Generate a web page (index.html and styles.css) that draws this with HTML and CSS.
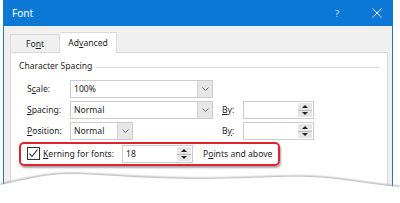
FILE: index.html
```html
<!DOCTYPE html>
<html lang="en">
<head>
    <meta charset="UTF-8">
    <meta name="viewport" content="width=device-width, initial-scale=1.0">
    <title>Font</title>
    <link rel="stylesheet" href="styles.css">
</head>
<body>
    <div class="dialog">
        <div class="titlebar">
            <span class="title">Font</span>
            <span class="title-btn help">?</span>
            <span class="title-btn close">
                <svg width="10" height="10" viewBox="0 0 10 10"><path d="M0.5 0.5 L9.5 9.5 M9.5 0.5 L0.5 9.5" stroke="#fff" stroke-width="1" fill="none"/></svg>
            </span>
        </div>

        <div class="dialog-body">
            <div class="tabs">
                <div class="tab">Fo<u>n</u>t</div>
                <div class="tab selected">Ad<u>v</u>anced</div>
            </div>

            <div class="panel">
                <div class="group-label">
                    <span>Character Spacing</span>
                    <div class="group-line"></div>
                </div>

                <div class="spacing-grid">
                    <label>S<u>c</u>ale:</label>
                    <div class="combo">
                        <span class="combo-text">100%</span>
                        <span class="combo-btn"><svg width="7" height="4" viewBox="0 0 7 4"><path d="M0.5 0.5 L3.5 3.5 L6.5 0.5" stroke="#666" fill="none"/></svg></span>
                    </div>
                    <span></span>
                    <span></span>

                    <label><u>S</u>pacing:</label>
                    <div class="combo">
                        <span class="combo-text">Normal</span>
                        <span class="combo-btn"><svg width="7" height="4" viewBox="0 0 7 4"><path d="M0.5 0.5 L3.5 3.5 L6.5 0.5" stroke="#666" fill="none"/></svg></span>
                    </div>
                    <label class="by-label"><u>B</u>y:</label>
                    <div class="spin">
                        <span class="spin-text"></span>
                        <span class="spin-btns">
                            <span class="arrow up"></span>
                            <span class="arrow down"></span>
                        </span>
                    </div>

                    <label><u>P</u>osition:</label>
                    <div class="combo short">
                        <span class="combo-text">Normal</span>
                        <span class="combo-btn"><svg width="7" height="4" viewBox="0 0 7 4"><path d="M0.5 0.5 L3.5 3.5 L6.5 0.5" stroke="#666" fill="none"/></svg></span>
                    </div>
                    <label class="by-label">B<u>y</u>:</label>
                    <div class="spin">
                        <span class="spin-text"></span>
                        <span class="spin-btns">
                            <span class="arrow up"></span>
                            <span class="arrow down"></span>
                        </span>
                    </div>
                </div>

                <div class="kerning">
                    <span class="checkbox">
                        <svg width="11" height="11" viewBox="0 0 11 11"><path d="M1.5 5.5 L4 8.5 L9.5 1.5" stroke="#222" stroke-width="1.1" fill="none"/></svg>
                    </span>
                    <label class="kerning-label"><u>K</u>erning for fonts:</label>
                    <div class="spin">
                        <span class="spin-text">18</span>
                        <span class="spin-btns">
                            <span class="arrow up"></span>
                            <span class="arrow down"></span>
                        </span>
                    </div>
                    <span class="points">P<u>o</u>ints and above</span>
                </div>
            </div>
        </div>
    </div>

    <!-- torn paper edge over the bottom of the dialog -->
    <svg class="torn" width="400" height="40" viewBox="0 0 400 40">
        <defs>
            <filter id="shade" x="-5%" y="-50%" width="110%" height="200%">
                <feGaussianBlur stdDeviation="1.2"/>
            </filter>
        </defs>
        <path d="M0 22 C20 18 45 10 75 11 C110 12 150 16 200 16 C245 16 280 13 310 14 C340 15 365 21 400 24" stroke="#9a9a9a" stroke-width="2" fill="none" filter="url(#shade)"/>
        <path d="M0 22 C20 18 45 10 75 11 C110 12 150 16 200 16 C245 16 280 13 310 14 C340 15 365 21 400 24 L400 40 L0 40 Z" fill="#fff"/>
    </svg>
</body>
</html>
```

FILE: styles.css
```css
body {
    margin: 0;
    width: 400px;
    height: 203px;
    position: relative;
    overflow: hidden;
    background-color: #fff;
    font-family: "Segoe UI", "Noto Sans", sans-serif;
    font-size: 8.6px;
    color: #1e1e1e;
}
u {
    text-decoration-thickness: 1px;
    text-underline-offset: 1px;
}
.dialog {
    margin-left: 3px;
    width: 388px;
    height: 203px;
    background-color: #f0f0f0;
    border-left: 1px solid #1979d2;
    border-right: 1px solid #1979d2;
}
.titlebar {
    height: 26px;
    margin: 0 -1px;
    background-color: #0b78d6;
    color: #fff;
    display: flex;
    align-items: center;
}
.title {
    font-size: 10px;
    margin-left: 9px;
}
.title-btn {
    width: 32px;
    display: flex;
    justify-content: center;
    align-items: center;
}
.help {
    margin-left: auto;
    margin-right: 8px;
    font-size: 9.5px;
    color: #cfe3f6;
}
.close {
    margin-right: 0;
}
.dialog-body {
    padding: 6px 4px 0 6px;
}
.tabs {
    display: flex;
    align-items: flex-end;
    height: 20px;
}
.tab {
    height: 18px;
    width: 50px;
    box-sizing: border-box;
    border: 1px solid #d9d9d9;
    border-bottom: none;
    display: flex;
    justify-content: center;
    align-items: center;
    padding-top: 1px;
}
.tab.selected {
    height: 21px;
    width: 57px;
    background-color: #fff;
    border-left: none;
    margin-bottom: -1px;
    position: relative;
    padding-bottom: 2px;
}
.panel {
    background-color: #fff;
    border: 1px solid #d9d9d9;
    height: 140px;
    padding: 0 7px 0 8px;
}
.group-label {
    display: flex;
    align-items: center;
    height: 12px;
    margin-top: 7px;
}
.group-line {
    flex: 1;
    height: 1px;
    background-color: #dcdcdc;
    margin-left: 4px;
    margin-top: 2px;
}
.spacing-grid {
    display: grid;
    grid-template-columns: 43px 143px 30px 71px;
    grid-auto-rows: 18px;
    row-gap: 3px;
    margin-top: 8px;
    margin-left: 8px;
    align-items: center;
}
.by-label {
    padding-left: 9px;
}
.combo {
    height: 18px;
    box-sizing: border-box;
    border: 1px solid #cccccc;
    display: flex;
    background-color: #fff;
}
.combo.short {
    width: 63px;
}
.combo-text {
    flex: 1;
    padding-left: 3px;
    display: flex;
    align-items: center;
}
.combo-btn {
    width: 14px;
    background-color: #e6e6e6;
    border-left: 1px solid #d2d2d2;
    display: flex;
    justify-content: center;
    align-items: center;
}
.spin {
    width: 71px;
    height: 18px;
    box-sizing: border-box;
    border: 1px solid #cccccc;
    display: flex;
    background-color: #fff;
}
.spin-text {
    flex: 1;
    padding-left: 3px;
    display: flex;
    align-items: center;
}
.spin-btns {
    width: 14px;
    margin: 1px 1px 1px 0;
    display: flex;
    flex-direction: column;
    background-color: #e6e6e6;
}
.arrow {
    flex: 1;
    display: flex;
    justify-content: center;
    align-items: center;
}
.arrow.up {
    border-bottom: 1px solid #bcbcbc;
}
.arrow::before {
    content: "";
    border-left: 3px solid transparent;
    border-right: 3px solid transparent;
}
.arrow.up::before {
    border-bottom: 3px solid #222;
}
.arrow.down::before {
    border-top: 3px solid #222;
}
.kerning {
    margin-top: 2px;
    width: 261px;
    height: 24px;
    box-sizing: border-box;
    border: 2px solid #e3212a;
    border-radius: 5px;
    box-shadow: 1px 2px 2px rgba(0, 0, 0, 0.35);
    display: flex;
    align-items: center;
    padding-left: 6px;
}
.checkbox {
    width: 13px;
    height: 13px;
    box-sizing: border-box;
    border: 1px solid #333;
    display: flex;
    justify-content: center;
    align-items: center;
    margin-top: -2px;
}
.kerning-label {
    width: 79px;
    margin-left: 3px;
}
.points {
    margin-left: 10px;
}
.torn {
    position: absolute;
    left: 0;
    top: 163px;
}
```
